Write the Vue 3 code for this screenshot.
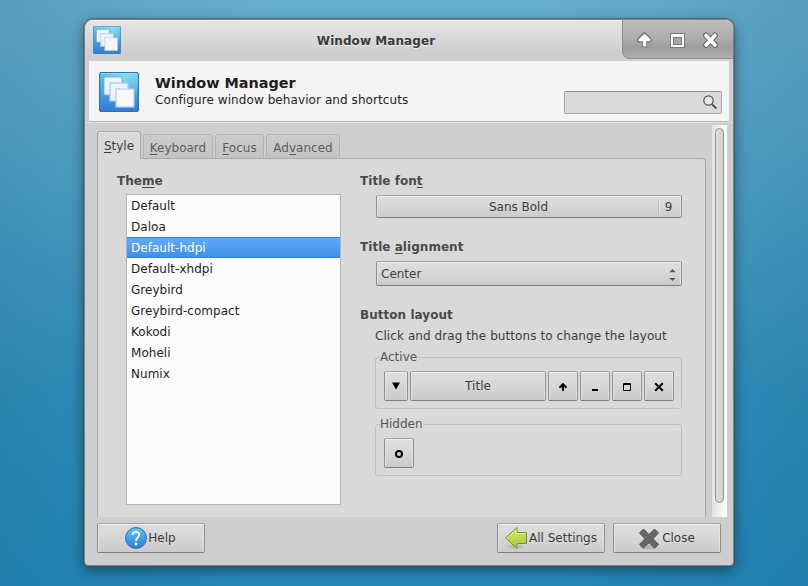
<template>
  <div class="desktop">
    <div class="window">
      <!-- title bar -->
      <div class="titlebar">
        <svg class="app-icon" width="28" height="28" viewBox="0 0 40 40">
          <use href="#wm-icon" />
        </svg>
        <div class="title">Window Manager</div>
        <div class="window-buttons">
          <svg width="111" height="38" viewBox="0 0 111 38">
            <g fill="none" stroke="#6f6f6f" stroke-linecap="round" stroke-linejoin="round">
              <path d="M21.500 25V16M16.500 20l5-5 5 5z" stroke-width="5" />
              <path d="M83 15.500l9 9.500M92 15.500L83 25" stroke-width="6" />
            </g>
            <path d="M21.500 25V17" stroke="#fff" stroke-width="3.400" stroke-linecap="round" />
            <path d="M16.500 20l5-5 5 5z" fill="#fff" stroke="#fff" stroke-width="2.400" stroke-linejoin="round" />
            <path d="M83 15.500l9 9.500M92 15.500L83 25" stroke="#fff" stroke-width="3.600" stroke-linecap="round" />
            <rect x="47.500" y="13.500" width="14" height="14" fill="#fff" stroke="#777" />
            <rect x="50.500" y="17.500" width="8" height="7" fill="#a9a9a9" stroke="#777" />
          </svg>
        </div>
      </div>

      <!-- header -->
      <header class="header">
        <svg class="header-icon" width="40" height="41" viewBox="0 0 40 41">
          <defs>
            <linearGradient id="blue" x1="0" y1="0" x2="0" y2="1">
              <stop offset="0" stop-color="#62c4e8" />
              <stop offset="0.5" stop-color="#46a1e4" />
              <stop offset="1" stop-color="#327bd8" />
            </linearGradient>
            <radialGradient id="glow" cx="0.7" cy="0" r="0.65">
              <stop offset="0" stop-color="#9be6f5" stop-opacity="0.75" />
              <stop offset="1" stop-color="#9be6f5" stop-opacity="0" />
            </radialGradient>
            <g id="wm-icon">
              <rect x="0.500" y="0.500" width="39" height="39" rx="1.500" fill="url(#blue)" stroke="#2d71b4" />
              <rect x="1" y="1" width="38" height="38" rx="1" fill="url(#glow)" />
              <path d="M1.500 1.500h37" stroke="#a4e0f2" opacity="0.7" />
              <rect x="5" y="5" width="18" height="18" fill="#f1f2f5" stroke="#64b0df" stroke-width="0.800" />
              <rect x="11" y="11" width="18" height="18" fill="#f1f2f5" stroke="#a9cce6" stroke-width="1.200" />
              <rect x="17" y="17" width="18" height="18" fill="#f8f8f8" stroke="#b4cde2" stroke-width="1.200" />
            </g>
          </defs>
          <use href="#wm-icon" />
        </svg>
        <div class="header-text">
          <h1>Window Manager</h1>
          <p>Configure window behavior and shortcuts</p>
        </div>
        <div class="search">
          <svg width="16" height="16" viewBox="0 0 16 16">
            <circle cx="7.500" cy="5.500" r="4.700" fill="#e6e6e6" stroke="#555" stroke-width="1.200" />
            <path d="M11 9.200l4.300 4.300" stroke="#555" stroke-width="2" />
          </svg>
        </div>
      </header>

      <div class="body">
        <!-- notebook -->
        <div class="notebook">
          <div class="tabs">
            <div
              v-for="tab in tabs"
              :key="tab.name"
              class="tab"
              :class="[tab.name, { active: tab.name === activeTab }]"
              @click="activeTab = tab.name"
            ><span>{{ tab.before }}<u>{{ tab.key }}</u>{{ tab.after }}</span></div>
          </div>

          <div class="page">
            <section class="theme-col">
              <h2>The<u>m</u>e</h2>
              <ul class="theme-list">
                <li
                  v-for="theme in themes"
                  :key="theme"
                  :class="{ selected: theme === selectedTheme }"
                  @click="selectedTheme = theme"
                >{{ theme }}</li>
              </ul>
            </section>

            <section class="options-col">
              <h2>Title fon<u>t</u></h2>
              <button class="btn font-btn">
                <span class="font-name">Sans Bold</span>
                <span class="font-size">9</span>
              </button>

              <h2>Title <u>a</u>lignment</h2>
              <button class="btn combo">
                <span>Center</span>
                <svg width="7" height="12" viewBox="0 0 7 12">
                  <path d="M0.300 3.200L3.500 0l3.200 3.200zM0.300 9L3.500 12 6.700 9z" fill="#555" />
                </svg>
              </button>

              <h2>Button layout</h2>
              <p class="hint">Click and drag the buttons to change the layout</p>

              <div class="frame">
                <span class="frame-label">Active</span>
                <button v-for="b in activeButtons" :key="b" class="btn layout-btn" :class="b">
                  <template v-if="b === 'title'">Title</template>
                  <svg v-else width="12" height="12" viewBox="0 0 12 12">
                    <path v-if="b === 'menu'" d="M2 2.500h8L6 9.500z" fill="#000" />
                    <path v-if="b === 'shade'" d="M6 11V4.500M2.500 7.700L6 4.200L9.500 7.700" class="stroke" />
                    <path v-if="b === 'hide'" d="M3 10h6" class="stroke" />
                    <path v-if="b === 'maximize'" d="M2.500 3.500h7v7h-7zM2 4.500h8" fill="none" stroke="#000" />
                    <path v-if="b === 'close'" d="M2.200 3.200l7.600 7.600M9.800 3.200l-7.600 7.600" class="stroke" />
                  </svg>
                </button>
              </div>

              <div class="frame">
                <span class="frame-label">Hidden</span>
                <button class="btn layout-btn hidden">
                  <svg width="12" height="12" viewBox="0 0 12 12">
                    <circle cx="6" cy="7" r="3" class="stroke" />
                  </svg>
                </button>
              </div>
            </section>
          </div>
        </div>

        <div class="scrollbar">
          <div class="thumb"></div>
        </div>
      </div>

      <!-- dialog buttons -->
      <footer class="footer">
        <button class="btn dialog-btn help-btn">
          <svg width="24" height="24" viewBox="0 0 24 24">
            <circle cx="12" cy="12" r="10.500" fill="url(#blue)" stroke="#2b72bd" />
            <path d="M8.700 8.800C8.800 4.900 15.300 4.900 15.200 8.700C15.100 11.300 12 11.500 12 15" fill="none" stroke="#fff" stroke-width="1.900" />
            <circle cx="12" cy="18" r="1.400" fill="#fff" />
          </svg>
          <span>Help</span>
        </button>
        <span class="spacer"></span>
        <button class="btn dialog-btn settings-btn">
          <svg width="24" height="24" viewBox="0 0 24 24">
            <defs>
              <linearGradient id="green" x1="0" y1="0" x2="0" y2="1">
                <stop offset="0" stop-color="#d8e86f" />
                <stop offset="1" stop-color="#a5c732" />
              </linearGradient>
            </defs>
            <ellipse cx="11" cy="20.500" rx="8" ry="2" fill="#000" opacity="0.100" />
            <path d="M1.500 12L13 1.500V6.500H22.500V17.500H13V22.500z" fill="url(#green)" stroke="#6b9a2c" stroke-linejoin="round" />
            <path d="M3.200 12L12 3.900V7.500H21.500" fill="none" stroke="#e8f2a0" opacity="0.800" />
          </svg>
          <span>All Settings</span>
        </button>
        <button class="btn dialog-btn close-btn">
          <svg width="24" height="24" viewBox="0 0 24 24">
            <ellipse cx="12" cy="21" rx="9" ry="2" fill="#000" opacity="0.120" />
            <path d="M2.500 7L6.500 3L12 8.500L17.500 3L21.500 7L16 12.800L21.500 18.300L17.500 22L12 16.700L6.500 22L2.500 18.300L8 12.800z" fill="#656764" stroke="#50524f" stroke-linejoin="round" />
          </svg>
          <span>Close</span>
        </button>
      </footer>
    </div>
  </div>
</template>

<script setup>
import { ref } from 'vue'

const activeTab = ref('style')
const selectedTheme = ref('Default-hdpi')

// key is the underlined accelerator letter
const tabs = [
  { name: 'style', before: '', key: 'S', after: 'tyle' },
  { name: 'keyboard', before: '', key: 'K', after: 'eyboard' },
  { name: 'focus', before: '', key: 'F', after: 'ocus' },
  { name: 'advanced', before: 'Ad', key: 'v', after: 'anced' }
]

const themes = [
  'Default',
  'Daloa',
  'Default-hdpi',
  'Default-xhdpi',
  'Greybird',
  'Greybird-compact',
  'Kokodi',
  'Moheli',
  'Numix'
]

const activeButtons = ['menu', 'title', 'shade', 'hide', 'maximize', 'close']
</script>

<style>
body {
  margin: 0;
  overflow: hidden;
}
</style>

<style scoped>
* {
  box-sizing: border-box;
}
h1, h2, p, ul {
  margin: 0;
  padding: 0;
}
svg {
  display: block;
  flex: none;
}
u {
  text-underline-offset: 2px;
  text-decoration-thickness: 1px;
  text-decoration-skip-ink: none;
}

.desktop {
  width: 808px;
  height: 586px;
  padding: 19px 0 0 84px;
  background:
    radial-gradient(ellipse 620px 900px at 50% 50%, rgba(0, 60, 100, 0) 40%, rgba(0, 50, 90, 0.24) 100%),
    linear-gradient(#66aecd, #4a9dc2 35%, #2f8eb9 65%, #2489b8);
  font-family: "DejaVu Sans", sans-serif;
  font-size: 12px;
  line-height: 14px;
  color: #3c3c3c;
}

.window {
  width: 650px;
  height: 547px;
  display: flex;
  flex-direction: column;
  background: #cecece;
  border: 1px solid #808080;
  border-radius: 9px 9px 4px 4px;
  box-shadow: 0 0 0 1px rgba(70, 70, 70, 0.5), 0 4px 14px rgba(0, 0, 0, 0.45);
  overflow: hidden;
}

/* title bar */
.titlebar {
  height: 41px;
  flex: none;
  display: flex;
  align-items: flex-start;
  background: linear-gradient(#e6e6e6, #cecece 80%);
  box-shadow: inset 0 1px #f0f0f0;
}
.app-icon {
  margin: 6px 0 0 8px;
}
.title {
  flex: 1;
  padding: 14px 0 0 9px;
  text-align: center;
  font-weight: bold;
  letter-spacing: 0.07px;
  color: #3a3a3a;
  text-shadow: 0 1px #eee;
}
.window-buttons {
  width: 111px;
  height: 39px;
  border-left: 1px solid #8c8c8c;
  border-bottom: 1px solid #8c8c8c;
  border-bottom-left-radius: 8px;
  background: linear-gradient(#bcbcbc, #adadad 50%, #9c9c9c 72%, #b0b0b0);
}

/* header */
.header {
  height: 61px;
  flex: none;
  display: flex;
  margin: 0 4px;
  padding: 11px 7px 0 10px;
  background: #f4f4f4;
  border-bottom: 1px solid #b8b8b8;
}
.header-text {
  flex: 1;
  padding: 3px 0 0 16px;
  color: #1e1e1e;
}
.header-text h1 {
  font-size: 14.4px;
  line-height: 17px;
}
.header-text p {
  margin-top: 1px;
  letter-spacing: 0.08px;
}
.search {
  width: 158px;
  height: 23px;
  margin-top: 19px;
  padding: 3px 4px;
  display: flex;
  justify-content: flex-end;
  background: #dadada;
  border: 1px solid #a5a5a5;
  border-top-color: #8e8e8e;
  border-radius: 2px;
}

/* notebook */
.body {
  height: 395px;
  flex: none;
  display: flex;
  justify-content: space-between;
  padding: 2px 6px 0 12px;
  border-top: 1px solid #dedede;
}
.notebook {
  width: 609px;
  padding-top: 6px;
  display: flex;
  flex-direction: column;
}
.tabs {
  display: flex;
  align-items: flex-end;
  gap: 2px;
  height: 28px;
  margin-bottom: -1px;
}
.tab {
  height: 25px;
  padding-top: 6px;
  text-align: center;
  color: #5c5c5c;
  background: linear-gradient(#cbcbcb, #c4c4c4);
  border: 1px solid #b2b2b2;
  border-radius: 3px 3px 0 0;
}
.tab.active {
  height: 28px;
  padding-top: 7px;
  color: #3c3c3c;
  background: #d9d9d9;
  border-color: #a6a6a6;
  border-bottom: none;
  box-shadow: inset 0 1px #e6e6e6;
  z-index: 1;
}
.tab.style { width: 44px; }
.tab.keyboard { width: 70px; }
.tab.focus { width: 49px; }
.tab.advanced { width: 74px; }

.page {
  flex: 1;
  display: flex;
  padding: 15px 22px 0 19px;
  background: #d9d9d9;
  border: 1px solid #a9a9a9;
  border-bottom: none;
  border-top-right-radius: 3px;
}
.page h2 {
  font-size: 12px;
  line-height: 14px;
  letter-spacing: 0.04px;
  color: #4a4a4a;
}
.theme-col {
  width: 243px;
}
.theme-list {
  width: 215px;
  height: 311px;
  margin: 6px 0 0 9px;
  list-style: none;
  background: #fcfcfc;
  border: 1px solid #b5b5b5;
  color: #1e1e1e;
}
.theme-list li {
  height: 21px;
  padding: 4px 4px 0;
  letter-spacing: 0.03px;
}
.theme-list li.selected {
  padding-top: 3px;
  color: #fff;
  background: linear-gradient(#62aafb, #3f90ea);
  border-top: 1px solid #3584d8;
  border-bottom: 1px solid #3584d8;
}

.options-col {
  width: 322px;
}

.btn {
  display: flex;
  align-items: center;
  margin: 0;
  padding: 0;
  font: inherit;
  color: #3c3c3c;
  background: linear-gradient(#dedede, #d8d8d8 45%, #cacaca);
  border: 1px solid #8f8f8f;
  border-top-color: #a3a3a3;
  border-bottom-color: #7e7e7e;
  border-radius: 2px;
  box-shadow: inset 0 1px #f0f0f0, inset 1px 0 #e2e2e2, inset -1px 0 #e2e2e2;
}
.font-btn {
  width: 306px;
  height: 23px;
  margin: 7px 0 22px 16px;
}
.font-name {
  flex: 1;
  padding-left: 2px;
}
.font-size {
  width: 23px;
  height: 14px;
  border-left: 1px solid #bdbdbd;
  box-shadow: inset 1px 0 #e6e6e6;
  padding-right: 3px;
}
.combo {
  width: 306px;
  height: 25px;
  margin: 7px 0 22px 16px;
  padding: 0 5px 0 4px;
  justify-content: space-between;
}
.combo svg {
  margin-top: 3px;
}
.hint {
  margin: 7px 0 14px 15px;
  white-space: nowrap;
  letter-spacing: 0.08px;
}

.frame {
  position: relative;
  width: 307px;
  height: 52px;
  margin: 0 0 15px 15px;
  padding: 13px 7px 0 8px;
  display: flex;
  gap: 2px;
  border: 1px solid #bdbdbd;
  border-radius: 3px;
}
/* label sits over the frame's top border */
.frame-label {
  position: absolute;
  top: -8px;
  left: 4px;
  padding-right: 1px;
  background: #d9d9d9;
  color: #555;
}
.layout-btn {
  flex: none;
  width: 30px;
  height: 30px;
  justify-content: center;
}
.layout-btn.menu {
  width: 24px;
}
.layout-btn.title {
  width: 136px;
  padding: 0;
  color: #3c3c3c;
  font-weight: normal;
  text-shadow: none;
}
.stroke {
  fill: none;
  stroke: #000;
  stroke-width: 2;
}

/* scrollbar */
.scrollbar {
  width: 15px;
  padding: 3px 2px 0 3px;
  background: linear-gradient(90deg, #e2e2e2, #fff);
}
.thumb {
  width: 9px;
  height: 375px;
  background: linear-gradient(90deg, #dedede, #d2d2d2);
  border: 1px solid #909090;
  border-radius: 5px;
}

/* footer */
.footer {
  display: flex;
  gap: 8px;
  padding: 6px 12px 0;
}
.spacer {
  flex: 1;
}
.dialog-btn {
  width: 108px;
  height: 30px;
  justify-content: center;
  gap: 1px;
}
.help-btn {
  gap: 0;
  padding-right: 2px;
}
.settings-btn {
  gap: 1px;
  padding-right: 1px;
}
.close-btn {
  padding-right: 2px;
}
</style>
